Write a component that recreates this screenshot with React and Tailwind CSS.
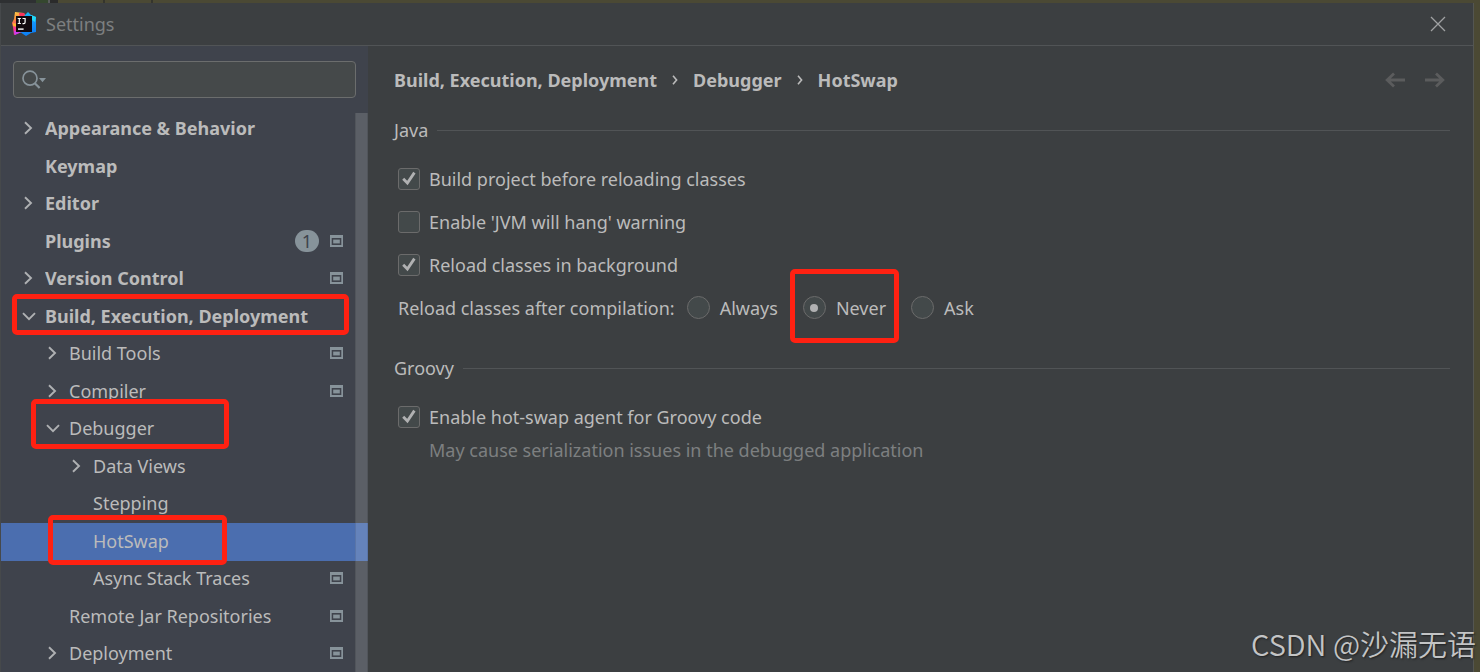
import React, { useState } from "react";

const TREE = [
  { label: "Appearance & Behavior", level: 0, arrow: "right" },
  { label: "Keymap", level: 0 },
  { label: "Editor", level: 0, arrow: "right" },
  { label: "Plugins", level: 0, badge: 1, project: true },
  { label: "Version Control", level: 0, arrow: "right", project: true },
  {
    label: "Build, Execution, Deployment",
    level: 0,
    arrow: "down",
    mark: "-top-1 left-[11px] h-[41px] w-[337px]",
  },
  { label: "Build Tools", level: 1, arrow: "right", project: true },
  { label: "Compiler", level: 1, arrow: "right", project: true },
  {
    label: "Debugger",
    level: 1,
    arrow: "down",
    mark: "-top-3 left-[30px] h-[50px] w-[198px]",
  },
  { label: "Data Views", level: 2, arrow: "right" },
  { label: "Stepping", level: 2 },
  { label: "HotSwap", level: 2, mark: "-top-2 left-[47px] h-[50px] w-[179px]" },
  { label: "Async Stack Traces", level: 2, project: true },
  { label: "Remote Jar Repositories", level: 1, project: true },
  { label: "Deployment", level: 1, arrow: "right", project: true },
];

const INDENT = ["pl-[18px] font-bold", "pl-[42px]", "pl-[66px]"];

function Logo() {
  return (
    <svg width="24" height="24" viewBox="0 0 24 24" aria-hidden="true">
      <defs>
        <linearGradient id="warm" x1="0" y1="0" x2="0.3" y2="1">
          <stop offset="0" stopColor="#ffd84a" />
          <stop offset="0.35" stopColor="#fc8b3a" />
          <stop offset="0.65" stopColor="#fa3d8c" />
          <stop offset="1" stopColor="#ff2fa8" />
        </linearGradient>
        <linearGradient id="cool" x1="0.4" y1="0" x2="0.6" y2="1">
          <stop offset="0" stopColor="#12b8f5" />
          <stop offset="0.5" stopColor="#1596fb" />
          <stop offset="1" stopColor="#0a7cf7" />
        </linearGradient>
      </defs>
      <path d="M3 0 12 1 14 5 10 20 2 23 1 15 0 11 2 7Z" fill="url(#warm)" />
      <path d="M1 11 6 12 5 15 1 14Z" fill="#ffb52e" />
      <path d="M7 1 12 1 14 5 8 6Z" fill="#f9355f" />
      <path d="M12 4 16 0 19 3 24 5 24 20 19 21 14 24 8 20Z" fill="url(#cool)" />
      <path d="M19 3 24 5 23 10 20 8Z" fill="#22d8f5" />
      <path d="M2 19 9 20 3 23Z" fill="#c93df0" />
      <rect x="4" y="4" width="16" height="16" fill="#120a10" />
      <path
        d="M5.7 6.5h3.2M7.3 6.5v5M5.7 11.5h3.2M10.5 6.5h2.6v3.7q0 1.4-1.3 1.4h-1.3"
        fill="none"
        stroke="#fff"
        strokeWidth="1.2"
      />
      <rect x="6" y="16.4" width="5.6" height="1.4" fill="#fff" />
    </svg>
  );
}

function Arrow({ direction }) {
  return (
    <svg
      width="18"
      height="18"
      viewBox="0 0 18 18"
      fill="none"
      stroke="#afb1b3"
      strokeWidth="1.9"
      aria-hidden="true"
    >
      {direction === "right" && <path d="M6 3.2 12 9 6 14.8" />}
      {direction === "down" && <path d="M4 6.2 10 12.2 16 6.2" />}
    </svg>
  );
}

function ProjectIcon() {
  return (
    <svg width="13" height="12" viewBox="0 0 13 12" aria-hidden="true">
      <rect width="13" height="12" fill="#87939a" />
      <rect x="1.7" y="3" width="9.6" height="7" fill="#3f434c" />
      <rect x="3.2" y="4.6" width="6.6" height="3.8" fill="#87939a" />
    </svg>
  );
}

function TreeRow({ item, selected, onSelect }) {
  return (
    <li
      className={
        "relative odd:h-[37px] even:h-[38px] " + (selected ? "bg-[#4b6eaf]" : "")
      }
    >
      <button
        type="button"
        onClick={onSelect}
        className={
          "flex h-full w-full items-center gap-2 pr-[25px] pb-[3px] text-left " +
          INDENT[item.level]
        }
      >
        <Arrow direction={item.arrow} />
        <span className="flex-1 truncate">{item.label}</span>
        <span className="flex items-center gap-[11px]">
          {item.badge && (
            <span className="flex h-[22px] w-6 items-center justify-center rounded-full bg-[#87939a] font-normal text-[#3f434c]">
              {item.badge}
            </span>
          )}
          {item.project && <ProjectIcon />}
        </span>
      </button>
      {item.mark && (
        <span
          className={
            "pointer-events-none absolute rounded-[5px] border-5 border-[#ff2112] " +
            item.mark
          }
        />
      )}
    </li>
  );
}

function Sidebar() {
  const [selected, setSelected] = useState("HotSwap");
  return (
    <aside className="relative flex w-[367px] shrink-0 flex-col overflow-hidden bg-[#3f434c]">
      <div className="px-3 pt-[15px] pb-[13px]">
        <label className="flex h-[37px] items-center rounded-[4px] border border-[#6b6d6d] bg-[#45494a] pl-2">
          <svg
            width="26"
            height="20"
            viewBox="0 0 26 20"
            fill="none"
            aria-hidden="true"
          >
            <circle cx="8" cy="8.2" r="7" stroke="#87939a" strokeWidth="1.7" />
            <path d="M12.8 13.2 17.6 18" stroke="#87939a" strokeWidth="2.2" />
            <path d="M17 8h7l-3.5 4.2Z" fill="#87939a" />
          </svg>
          <input
            type="search"
            aria-label="Search settings"
            className="min-w-0 flex-1 bg-transparent text-[#bbbbbb] outline-none"
          />
        </label>
      </div>
      <ul className="min-h-0">
        {TREE.map((item) => (
          <TreeRow
            key={item.label}
            item={item}
            selected={item.label === selected}
            onSelect={() => setSelected(item.label)}
          />
        ))}
      </ul>
      <div className="pointer-events-none absolute top-[67px] right-0 bottom-0 w-[13px] border-x border-black/10 bg-white/15" />
    </aside>
  );
}

function Section({ title, children }) {
  return (
    <section>
      <div className="flex h-8 items-center gap-[9px]">
        <h2>{title}</h2>
        <div className="h-px flex-1 bg-[#515456]" />
      </div>
      <div className="pt-[11px] pl-1">{children}</div>
    </section>
  );
}

function Check({ label, defaultChecked }) {
  return (
    <label className="flex h-[43px] items-center gap-[9px]">
      <span className="grid">
        <input
          type="checkbox"
          defaultChecked={defaultChecked}
          className="peer col-start-1 row-start-1 h-[22px] w-[22px] appearance-none rounded-[3px] border border-[#6b6b6b] bg-[#43494a]"
        />
        <svg
          className="pointer-events-none invisible col-start-1 row-start-1 peer-checked:visible"
          width="22"
          height="22"
          viewBox="0 0 22 22"
          fill="none"
          stroke="#b0b1b2"
          strokeWidth="2.8"
          aria-hidden="true"
        >
          <path d="M5.2 10.8 9.4 15 16.4 4.6" />
        </svg>
      </span>
      {label}
    </label>
  );
}

function Radio({ label, defaultChecked, marked }) {
  return (
    <label className="relative flex items-center gap-[10px]">
      <span className="grid place-items-center">
        <input
          type="radio"
          name="reload"
          defaultChecked={defaultChecked}
          className="peer col-start-1 row-start-1 h-[23px] w-[23px] appearance-none rounded-full border border-[#6b6b6b] bg-[#43494a]"
        />
        <span className="pointer-events-none invisible col-start-1 row-start-1 h-2 w-2 rounded-full bg-[#b0b1b2] peer-checked:visible" />
      </span>
      {label}
      {marked && (
        <span className="pointer-events-none absolute -inset-x-[13px] -top-[27px] h-[74px] rounded-[5px] border-5 border-[#ff2112]" />
      )}
    </label>
  );
}

function Crumbs() {
  const divider = (
    <svg
      width="6"
      height="10"
      viewBox="0 0 6 10"
      fill="none"
      stroke="#bbbbbb"
      strokeWidth="1.6"
      aria-hidden="true"
    >
      <path d="M1 .8 4.6 5 1 9.2" />
    </svg>
  );
  return (
    <nav
      aria-label="Breadcrumb"
      className="flex flex-1 items-center gap-[15px] font-bold"
    >
      <a href="#build">Build, Execution, Deployment</a>
      {divider}
      <a href="#debugger">Debugger</a>
      {divider}
      <a href="#hotswap">HotSwap</a>
    </nav>
  );
}

function HistoryButton({ label, path }) {
  return (
    <button type="button" aria-label={label}>
      <svg
        width="20"
        height="16"
        viewBox="0 0 20 16"
        fill="none"
        stroke="#5b5c5d"
        strokeWidth="2.8"
        aria-hidden="true"
      >
        <path d={path} />
      </svg>
    </button>
  );
}

export default function App() {
  return (
    <div className="flex h-screen flex-col overflow-hidden bg-[#4b4934] pr-[6px] font-['Noto_Sans','Noto_Sans_CJK_SC',sans-serif] text-[18px] leading-6 text-[#bbbbbb]">
      <div className="flex h-[3px] shrink-0">
        <div className="w-9 bg-[#2e3032]" />
        <div className="w-3 bg-[#35472f]" />
        <div className="w-[2px] bg-[#5a5c5d]" />
        <div className="w-2 bg-[#2b2b2b]" />
        <div className="w-[45px]" />
        <div className="w-[2px] bg-[#35352d]" />
        <div className="w-[46px]" />
        <div className="w-[2px] bg-[#35352d]" />
      </div>
      <div className="flex min-h-0 flex-1 flex-col border-x border-l-[#46494b] border-r-[#545652] bg-[#3c3f41]">
        <header className="flex h-[43px] shrink-0 items-center gap-[10px] border-b border-[#515456] pr-[27px] pl-[11px]">
          <Logo />
          <h1 className="flex-1 text-[#7d7f80]">Settings</h1>
          <button type="button" aria-label="Close">
            <svg
              width="16"
              height="16"
              viewBox="0 0 16 16"
              stroke="#a0a2a3"
              strokeWidth="1.3"
              aria-hidden="true"
            >
              <path d="M1 1 15 15M15 1 1 15" />
            </svg>
          </button>
        </header>
        <div className="flex min-h-0 flex-1">
          <Sidebar />
          <main className="min-w-0 flex-1 pr-[23px] pl-[26px]">
            <div className="flex h-[68px] items-center">
              <Crumbs />
              <div className="flex gap-5 pr-[5px]">
                <HistoryButton label="Back" path="M20 8H2M9 1.6 2.2 8 9 14.4" />
                <HistoryButton
                  label="Forward"
                  path="M0 8h18M11 1.6 17.8 8 11 14.4"
                />
              </div>
            </div>
            <div className="flex flex-col gap-[23px]">
              <Section title="Java">
                <Check label="Build project before reloading classes" defaultChecked />
                <Check label="Enable 'JVM will hang' warning" />
                <Check label="Reload classes in background" defaultChecked />
                <div
                  role="radiogroup"
                  aria-labelledby="reload-label"
                  className="flex h-[43px] items-center"
                >
                  <span id="reload-label" className="pr-3">
                    Reload classes after compilation:
                  </span>
                  <div className="flex gap-[25px]">
                    <Radio label="Always" />
                    <Radio label="Never" defaultChecked marked />
                    <Radio label="Ask" />
                  </div>
                </div>
              </Section>
              <Section title="Groovy">
                <Check label="Enable hot-swap agent for Groovy code" defaultChecked />
                <p className="pl-[31px] text-[#7d7f80]">
                  May cause serialization issues in the debugged application
                </p>
              </Section>
            </div>
          </main>
        </div>
      </div>
      <div className="pointer-events-none absolute right-1 bottom-[9px] font-['Noto_Sans_CJK_SC',sans-serif] text-[29px] leading-10 font-[350] text-[#c3c4c5] [text-shadow:1px_1px_2px_rgba(0,0,0,0.5)]">
        CSDN @沙漏无语
      </div>
    </div>
  );
}
